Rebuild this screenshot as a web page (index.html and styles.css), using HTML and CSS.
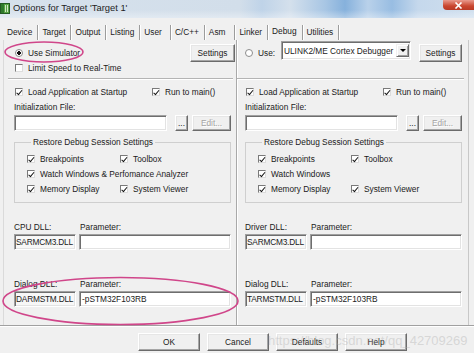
FILE: index.html
```html
<!DOCTYPE html>
<html lang="en">
<head>
<meta charset="utf-8">
<title>Options for Target 'Target 1'</title>
<link rel="stylesheet" href="styles.css">
</head>
<body>
<div class="window">
  <div class="titlebar">
    <svg class="appicon" width="10" height="11" viewBox="0 0 10 11">
      <rect x="0" y="0" width="10" height="11" fill="#245a22"/>
      <rect x="1" y="1" width="8" height="9" fill="#58a443"/>
      <rect x="1" y="1" width="3" height="9" fill="#2f7a2b"/>
      <path d="M5.5 2v7M7.5 2v7" stroke="#dfeed6" stroke-width="0.9"/>
    </svg>
    <span class="title">Options for Target 'Target 1'</span>
    <span class="close">
      <svg width="9" height="7" viewBox="0 0 9 7"><path d="M1.5 0.5L7.5 6.5M7.5 0.5L1.5 6.5" stroke="#fff" stroke-width="1.6"/></svg>
    </span>
  </div>

  <div class="tabs">
    <span class="tab">Device</span>
    <span class="tab">Target</span>
    <span class="tab">Output</span>
    <span class="tab">Listing</span>
    <span class="tab user">User</span>
    <span class="tab">C/C++</span>
    <span class="tab asm">Asm</span>
    <span class="tab">Linker</span>
    <span class="tab active">Debug</span>
    <span class="tab">Utilities</span>
  </div>

  <div class="page">
    <div class="panel left">
      <div class="row top">
        <label class="opt"><span class="rb on"></span>Use Simulator</label>
        <span class="btn settings">Settings</span>
      </div>
      <label class="opt"><span class="cb"></span>Limit Speed to Real-Time</label>
      <div class="rule"></div>
      <div class="row pair">
        <label class="opt"><span class="cb on"></span>Load Application at Startup</label>
        <label class="opt"><span class="cb on"></span>Run to main()</label>
      </div>
      <div class="caption cap-init">Initialization File:</div>
      <div class="row file">
        <span class="edit"></span>
        <span class="btn dots">...</span>
        <span class="btn editbtn">Edit...</span>
      </div>
      <fieldset class="group">
        <legend>Restore Debug Session Settings</legend>
        <div class="glist">
          <div class="grow">
            <label class="opt"><span class="cb on"></span>Breakpoints</label>
            <label class="opt"><span class="cb on"></span>Toolbox</label>
          </div>
          <div class="grow">
            <label class="opt"><span class="cb on"></span>Watch Windows &amp; Perfomance Analyzer</label>
          </div>
          <div class="grow">
            <label class="opt"><span class="cb on"></span>Memory Display</label>
            <label class="opt"><span class="cb on"></span>System Viewer</label>
          </div>
        </div>
      </fieldset>
      <div class="caption dllcap"><span class="c1">CPU DLL:</span><span>Parameter:</span></div>
      <div class="row dll">
        <span class="edit ro">SARMCM3.DLL</span>
        <span class="edit param"></span>
      </div>
      <div class="caption dllcap second"><span class="c1">Dialog DLL:</span><span>Parameter:</span></div>
      <div class="row dll">
        <span class="edit ro">DARMSTM.DLL</span>
        <span class="edit param">-pSTM32F103RB</span>
      </div>
    </div>

    <div class="panel right">
      <div class="row top">
        <label class="opt"><span class="rb"></span>Use:</label>
        <div class="combo"><span class="ctext">ULINK2/ME Cortex Debugger</span><span class="drop"></span></div>
        <span class="btn settings">Settings</span>
      </div>
      <div class="blank"></div>
      <div class="rule"></div>
      <div class="row pair">
        <label class="opt"><span class="cb on"></span>Load Application at Startup</label>
        <label class="opt"><span class="cb on"></span>Run to main()</label>
      </div>
      <div class="caption cap-init">Initialization File:</div>
      <div class="row file">
        <span class="edit"></span>
        <span class="btn dots">...</span>
        <span class="btn editbtn">Edit...</span>
      </div>
      <fieldset class="group">
        <legend>Restore Debug Session Settings</legend>
        <div class="glist">
          <div class="grow">
            <label class="opt"><span class="cb on"></span>Breakpoints</label>
            <label class="opt"><span class="cb on"></span>Toolbox</label>
          </div>
          <div class="grow">
            <label class="opt"><span class="cb on"></span>Watch Windows</label>
          </div>
          <div class="grow">
            <label class="opt"><span class="cb on"></span>Memory Display</label>
            <label class="opt"><span class="cb on"></span>System Viewer</label>
          </div>
        </div>
      </fieldset>
      <div class="caption dllcap"><span class="c1">Driver DLL:</span><span>Parameter:</span></div>
      <div class="row dll">
        <span class="edit ro">SARMCM3.DLL</span>
        <span class="edit param"></span>
      </div>
      <div class="caption dllcap second"><span class="c1">Dialog DLL:</span><span>Parameter:</span></div>
      <div class="row dll">
        <span class="edit ro">TARMSTM.DLL</span>
        <span class="edit param">-pSTM32F103RB</span>
      </div>
    </div>
  </div>

  <div class="footer">
    <span class="btn">OK</span>
    <span class="btn">Cancel</span>
    <span class="btn">Defaults</span>
    <span class="btn help">Help</span>
  </div>

  <svg class="ring" width="474" height="353" viewBox="0 0 474 353">
    <ellipse cx="44" cy="52" rx="39" ry="10"/>
    <ellipse cx="120.5" cy="301" rx="117.5" ry="23.5"/>
  </svg>
  <div class="watermark">https://blog.csdn.net/qq_42709269</div>
</div>
</body>
</html>
```

FILE: styles.css
```css
* { box-sizing: border-box; }
html, body { margin: 0; padding: 0; }
body {
  width: 474px;
  height: 353px;
  overflow: hidden;
  background: #f0f0f0;
  font-family: "Liberation Sans", Arial, sans-serif;
  font-size: 8.3px;
  color: #1a1a1a;
}
.window { position: relative; width: 474px; height: 353px; }

/* title bar */
.titlebar {
  height: 18px;
  display: flex;
  align-items: flex-start;
  background:
    linear-gradient(180deg, rgba(255,255,255,0) 55%, rgba(255,255,255,.35) 100%),
    linear-gradient(90deg, #d6e1ec 0, #d2deea 240px, #bfd3e8 262px, #d4e0ec 290px, #a8c6e4 325px, #86b1dc 345px, #b9d1ea 368px, #98bde2 392px, #c5d8ec 418px, #d0dfee 474px);
}
.appicon { flex: none; margin-top: 3px; }
.title { margin: 2px 0 0 3px; font-size: 9.4px; line-height: 12px; color: #1e1e1e; white-space: nowrap; }
.close {
  margin-left: auto;
  width: 31px;
  height: 10px;
  border-radius: 0 0 0 4px;
  background: linear-gradient(#e99a8d, #c9462f 60%, #b93a26);
  display: flex;
  align-items: center;
  justify-content: center;
}

/* tabs */
.tabs { height: 22px; display: flex; align-items: flex-end; padding-left: 3px; }
.tab {
  height: 15px;
  line-height: 15px;
  padding: 0 5px 0 4px;
  border-right: 1px solid #9c9c9c;
  box-shadow: 1px 0 0 #fff;
  white-space: nowrap;
}
.tab.user { padding-right: 8px; }
.tab.asm { padding-right: 9px; }
.tab.active { line-height: 12px; }

/* page */
.page { height: 285px; display: flex; }
.panel { display: flex; flex-direction: column; }
.panel.left {
  width: 234px;
  margin-left: 3px;
  border-left: 1px solid #dadada;
  border-right: 1px solid #a9a9a9;
  padding: 0 5px 0 10px;
}
.panel.right {
  width: 232px;
  border-left: 1px solid #fff;
  border-right: 1px solid #c8c8c8;
  padding: 0 6px 0 7px;
}

.row { display: flex; align-items: center; }
.row.top { height: 18px; margin-top: 4px; }
.opt { display: flex; align-items: center; height: 12px; white-space: nowrap; }
.blank { height: 12px; }

.cb {
  flex: none;
  position: relative;
  width: 8px;
  height: 8px;
  margin: 0 5px 0 1px;
  background: #fff;
  border: 1px solid;
  border-color: #7a7a7a #dcdcdc #dcdcdc #7a7a7a;
}
.cb.on::after {
  content: "";
  position: absolute;
  left: 1.5px;
  top: -0.5px;
  width: 2px;
  height: 4.5px;
  border: solid #111;
  border-width: 0 1.6px 1.6px 0;
  transform: rotate(40deg);
}
.rb {
  flex: none;
  width: 8px;
  height: 8px;
  margin: 0 5px 0 1px;
  border-radius: 50%;
  border: 1px solid #8c8c8c;
  background: #fff;
}
.rb.on { background: radial-gradient(circle, #111 0 1.6px, #fff 2.1px); }
.right .rb { margin-left: 0; }

.btn {
  display: flex;
  align-items: center;
  justify-content: center;
  height: 18px;
  background: #f0f0f0;
  border: 1px solid;
  border-color: #fff #6b6b6b #6b6b6b #fff;
  box-shadow: inset -1px -1px 0 #a6a6a6, inset 1px 1px 0 #e6e6e6;
  white-space: nowrap;
}
.settings { margin-left: auto; width: 45px; }
.left .settings { margin-right: -4px; }
.right .settings { width: 43px; margin-left: 8px; }

.combo {
  width: 130px;
  height: 19px;
  margin-left: auto;
  align-self: flex-start;
  margin-top: -3px;
  display: flex;
  align-items: center;
  padding: 0 1px 0 2px;
  background: #fff;
  border: 1px solid;
  border-color: #a0a0a0 #fff #fff #a0a0a0;
  box-shadow: inset 1px 1px 0 #6e6e6e, inset -1px -1px 0 #e3e3e3;
  white-space: nowrap;
}
.drop {
  margin-left: auto;
  width: 13px;
  height: 13px;
  display: flex;
  align-items: center;
  justify-content: center;
  background: #f0f0f0;
  border: 1px solid;
  border-color: #f0f0f0 #6b6b6b #6b6b6b #f0f0f0;
  box-shadow: inset 1px 1px 0 #fff, inset -1px -1px 0 #a0a0a0;
}
.drop::after {
  content: "";
  border-left: 3px solid transparent;
  border-right: 3px solid transparent;
  border-top: 3px solid #000;
}

.rule {
  height: 2px;
  margin: 4px -2px 0 -6px;
  border-top: 1px solid #b4b4b4;
  border-bottom: 1px solid #fff;
}
.right .rule { margin-left: -8px; }

.row.pair { margin-top: 6px; height: 12px; }
.pair .opt:first-child { width: 137px; }

.caption { height: 12px; line-height: 12px; white-space: nowrap; }
.cap-init { margin-top: 3px; }

.row.file { margin-top: 2px; height: 16px; }
.edit {
  display: flex;
  align-items: center;
  height: 16px;
  padding-left: 2px;
  background: #fff;
  border: 1px solid;
  border-color: #a0a0a0 #fff #fff #a0a0a0;
  box-shadow: inset 1px 1px 0 #6e6e6e, inset -1px -1px 0 #e3e3e3;
  white-space: nowrap;
  overflow: hidden;
}
.file .edit { width: 153px; }
.file .btn { height: 16px; }
.dots { width: 13px; margin-left: 8px; align-items: flex-end; padding-bottom: 2px; }
.editbtn { width: 39px; margin-left: 4px; color: #a3a3a3; text-shadow: 1px 1px 0 #fff; }

.group {
  margin: 5px 0 0;
  padding: 5px 0 7px 11px;
  border: 1px solid #cfcfcf;
  width: 217px;
  min-width: 0;
}
.group legend { padding: 0 2px; margin-left: 5px; height: 12px; line-height: 12px; }
.glist { display: flex; flex-direction: column; gap: 3px; }
.grow { display: flex; }
.grow .opt:first-child { width: 93px; }

.dllcap { display: flex; margin-top: 18px; }
.dllcap .c1 { width: 66px; }
.dllcap.second { margin-top: 28px; }
.row.dll { margin-top: 1px; height: 16px; }
.ro { width: 62px; padding-left: 1px; letter-spacing: -0.2px; background: #f7f7f7; }
.param { width: 152px; margin-left: 3px; }

/* footer */
.footer {
  height: 28px;
  border-top: 1px solid #a0a0a0;
  box-shadow: inset 0 1px 0 #fff;
  display: flex;
  align-items: flex-start;
  padding: 7px 0 0 138px;
}
.footer .btn { width: 62px; height: 18px; }
.footer .btn + .btn { margin-left: 7px; }
.footer .help { margin-left: 65px; }

/* annotations */
.ring { position: absolute; left: 0; top: 0; pointer-events: none; }
.ring ellipse { fill: none; stroke: #d0468a; stroke-width: 1.6; }
.watermark {
  position: absolute;
  left: 268px;
  top: 333px;
  font-size: 13px;
  line-height: 15px;
  color: rgba(175, 175, 175, .4);
  white-space: nowrap;
  pointer-events: none;
}
```
